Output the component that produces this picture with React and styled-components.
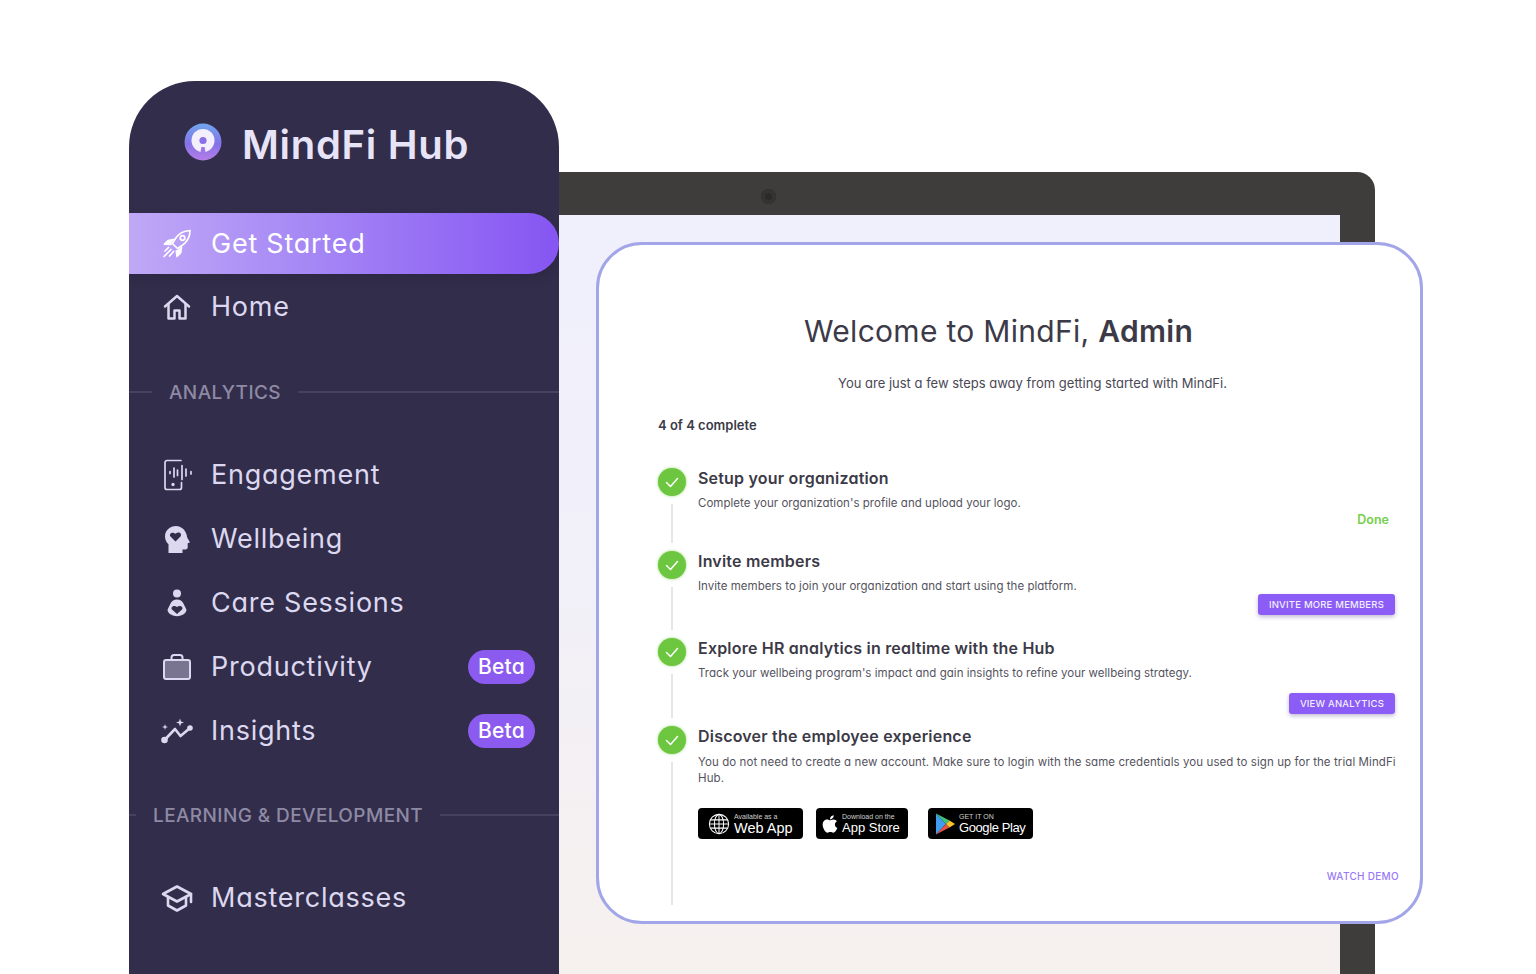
import React from 'react'
import styled, { createGlobalStyle } from 'styled-components'
import { FaApple } from 'react-icons/fa'

const GlobalStyle = createGlobalStyle`
    html, body {
        margin: 0;
        padding: 0;
        background: #fff;
    }
    * {
        box-sizing: border-box;
    }
    body {
        font-family: Inter, 'Noto Sans', sans-serif;
        font-feature-settings: 'cv11' 1;
    }
`

const SIDEBAR_BG = '#322d4a'

const LogoMark = () => (
    <svg width='38' height='38' viewBox='0 0 38 38'>
        <defs>
            <linearGradient id='logoFill' x1='0' y1='0' x2='0' y2='1'>
                <stop offset='0' stopColor='#6fa6ee' />
                <stop offset='0.55' stopColor='#8572e8' />
                <stop offset='1' stopColor='#b67de8' />
            </linearGradient>
        </defs>
        <circle cx='19' cy='19' r='18.5' fill='url(#logoFill)' />
        <circle cx='19' cy='17.5' r='11.5' fill='#f4effc' />
        <circle cx='19' cy='17.5' r='3.6' fill='#8a6fe6' />
        <path d='M17.4 24h3.2l1 5.5h-5.2z' fill='#a077e8' />
    </svg>
)

const RocketIcon = () => (
    <svg width='32' height='32' viewBox='0 0 32 32' fill='none' stroke='#fff' strokeWidth='1.7' strokeLinejoin='round' strokeLinecap='round'>
        <path d='M29 2.5c-6.5.3-11.5 3.5-14.5 8l-3.2 5 5.2 5 5-3.4c4.500-3.100 7.500-8.100 7.500-14.600z' />
        <circle cx='21.500' cy='10' r='2.300' />
        <path d='M12.500 11.500 7 12.500l-3.500 3.700 6.500.3M20.500 19l-.8 5.700-3.700 3.800-.6-5.700' fill='#fff' />
        <path d='M10 21.500 3 28.500M7.500 19.500 4 23M12.500 23.500 8.500 28' />
    </svg>
)

const HomeIcon = () => (
    <svg width='30' height='30' viewBox='0 0 30 30' fill='none' stroke='currentColor' strokeWidth='2.500' strokeLinejoin='round' strokeLinecap='round'>
        <path d='M3 14.500 15 4l12 10.500' />
        <path d='M6.500 12v14.500h6V18.500h5v8h6V12' />
    </svg>
)

const EngagementIcon = () => (
    <svg width='32' height='32' viewBox='0 0 32 32' fill='none' stroke='currentColor' strokeWidth='1.700' strokeLinecap='round'>
        <path d='M20 1.500H6a2 2 0 0 0-2 2v25a2 2 0 0 0 2 2h12.500a2 2 0 0 0 2-2v-5' />
        <path d='M9 12.500v2M13 9v9M16.500 11v5.500M21 6.500v14M25 10v7M30 12.500v2.500' />
        <circle cx='12' cy='25.500' r='0.800' fill='currentColor' />
    </svg>
)

const HeadIcon = () => (
    <svg width='30' height='30' viewBox='0 0 30 30'>
        <path fill='currentColor' d='M14 2C8 2 3 6.500 3 12.500c0 3.200 1.400 5.800 3.500 7.700V29h14v-3.500h3c1.300 0 2.200-.9 2.200-2.200v-4l2.300-.9-2.800-5C24.500 7 20 2 14 2z' />
        <path fill={SIDEBAR_BG} d='M13.500 17.500 8.500 12.500c-2-2.500 1.800-5.500 5-2.700 3.200-2.800 7-.2 5 2.700z' />
    </svg>
)

const CareIcon = () => (
    <svg width='30' height='30' viewBox='0 0 30 30'>
        <circle cx='15' cy='5.500' r='4' fill='currentColor' />
        <path fill='currentColor' d='M15 11.500c3 0 5.300 1.300 6.300 3.800l3 6c1 3-3.800 7-9.300 7s-10.300-4-9.300-7l3-6c1-2.500 3.300-3.800 6.300-3.800z' />
        <path fill={SIDEBAR_BG} d='M15 26l-5-4.500c-1.800-2.400 2-5 5-2.500 3-2.500 6.800.1 5 2.500z' />
    </svg>
)

const BriefcaseIcon = () => (
    <svg width='30' height='30' viewBox='0 0 30 30' fill='none' stroke='currentColor' strokeWidth='2'>
        <rect x='2' y='8' width='26' height='19' rx='2' fill='rgba(220,216,240,0.42)' />
        <path d='M9.500 8V5.500C9.500 4 10.500 3 12 3h6c1.500 0 2.500 1 2.500 2.500V8' />
    </svg>
)

const InsightsIcon = () => (
    <svg width='32' height='32' viewBox='0 0 32 32' fill='none' stroke='currentColor' strokeWidth='2.600' strokeLinecap='round' strokeLinejoin='round'>
        <path d='M3.500 25 14 14l5.500 7L29 13' />
        <circle cx='3.500' cy='25' r='2' fill='currentColor' />
        <circle cx='29' cy='13' r='1.500' fill='currentColor' />
        <path fill='currentColor' stroke='none' d='M19 3.500l1 3 3 1-3 1-1 3-1-3-3-1 3-1zM4 9l.7 2.300L7 12l-2.300.7L4 15l-.7-2.300L1 12l2.300-.7z' />
    </svg>
)

const CapIcon = () => (
    <svg width='32' height='32' viewBox='0 0 32 32' fill='none' stroke='currentColor' strokeWidth='2.600' strokeLinejoin='round' strokeLinecap='round'>
        <path d='M16 4.500 30 12l-14 7.500L2 12z' />
        <path d='M7 15v8.500l9 5 9-5V15' />
        <path d='M30 12v8' />
    </svg>
)

const CheckIcon = () => (
    <svg width='14' height='14' viewBox='0 0 14 14' fill='none' stroke='#fff' strokeWidth='1.500' strokeLinecap='round' strokeLinejoin='round'>
        <path d='M1.500 7.500 5.500 11.500 12.500 3.500' />
    </svg>
)

const GlobeIcon = () => (
    <svg width='22' height='22' viewBox='0 0 24 24' fill='none' stroke='#fff' strokeWidth='1.100'>
        <circle cx='12' cy='12' r='10.500' />
        <ellipse cx='12' cy='12' rx='5' ry='10.500' />
        <path d='M12 1.500v21M2.500 7.500h19M1.500 12h21M2.500 16.500h19' />
    </svg>
)

const PlayIcon = () => (
    <svg width='20' height='24' viewBox='0 0 20 24'>
        <path d='M1 1.500v21L11 12z' fill='#3f9cf0' />
        <path d='M1 1.500 11 12l3.500-3.500z' fill='#3bc47a' />
        <path d='M1 22.500 11 12l3.500 3.500z' fill='#e8503f' />
        <path d='M14.500 8.500 20 12l-5.500 3.500L11 12z' fill='#f8c32c' />
    </svg>
)

const navItems = [
    { label: 'Engagement', icon: <EngagementIcon /> },
    { label: 'Wellbeing', icon: <HeadIcon /> },
    { label: 'Care Sessions', icon: <CareIcon /> },
    { label: 'Productivity', icon: <BriefcaseIcon />, beta: true },
    { label: 'Insights', icon: <InsightsIcon />, beta: true }
]

const App = () => {
    return (
        <Stage>
            <GlobalStyle />
            <Sidebar>
                <Brand>
                    <LogoMark />
                    <BrandName>MindFi Hub</BrandName>
                </Brand>
                <ActiveItem>
                    <IconSlot><RocketIcon /></IconSlot>
                    Get Started
                </ActiveItem>
                <NavItem>
                    <IconSlot><HomeIcon /></IconSlot>
                    Home
                </NavItem>
                <SectionLabel lead='23px' top='43px' bottom='41px'>ANALYTICS</SectionLabel>
                {navItems.map(item => (
                    <NavItem key={item.label}>
                        <IconSlot>{item.icon}</IconSlot>
                        {item.label}
                        {item.beta && <Beta>Beta</Beta>}
                    </NavItem>
                ))}
                <SectionLabel lead='7px' top='42px' bottom='41px'>LEARNING &amp; DEVELOPMENT</SectionLabel>
                <NavItem>
                    <IconSlot><CapIcon /></IconSlot>
                    Masterclasses
                </NavItem>
            </Sidebar>
            <Laptop>
                <Camera />
                <Screen />
                <Card>
                    <Heading>Welcome to MindFi, <strong>Admin</strong></Heading>
                    <Intro>You are just a few steps away from getting started with MindFi.</Intro>
                    <Progress>4 of 4 complete</Progress>
                    <Step height='83px'>
                        <Rail>
                            <Check><CheckIcon /></Check>
                            <RailLine />
                        </Rail>
                        <StepBody>
                            <StepTitle>Setup your organization</StepTitle>
                            <StepText>Complete your organization's profile and upload your logo.</StepText>
                            <Done>Done</Done>
                        </StepBody>
                    </Step>
                    <Step height='87px'>
                        <Rail>
                            <Check><CheckIcon /></Check>
                            <RailLine />
                        </Rail>
                        <StepBody>
                            <StepTitle>Invite members</StepTitle>
                            <StepText>Invite members to join your organization and start using the platform.</StepText>
                            <ActionButton>INVITE MORE MEMBERS</ActionButton>
                        </StepBody>
                    </Step>
                    <Step height='88px'>
                        <Rail>
                            <Check><CheckIcon /></Check>
                            <RailLine />
                        </Rail>
                        <StepBody>
                            <StepTitle>Explore HR analytics in realtime with the Hub</StepTitle>
                            <StepText>Track your wellbeing program's impact and gain insights to refine your wellbeing strategy.</StepText>
                            <ActionButton gap='12px'>VIEW ANALYTICS</ActionButton>
                        </StepBody>
                    </Step>
                    <Step height='187px'>
                        <Rail>
                            <Check><CheckIcon /></Check>
                            <RailLine />
                        </Rail>
                        <StepBody>
                            <StepTitle>Discover the employee experience</StepTitle>
                            <LongText>You do not need to create a new account. Make sure to login with the same credentials you used to sign up for the trial MindFi Hub.</LongText>
                            <Badges>
                                <StoreBadge width='105px' pad='10px'>
                                    <GlobeIcon />
                                    <BadgeCopy>
                                        <BadgeSmall>Available as a</BadgeSmall>
                                        <BadgeBig size='14.500px'>Web App</BadgeBig>
                                    </BadgeCopy>
                                </StoreBadge>
                                <StoreBadge width='92px' pad='4px' close>
                                    <FaApple size={20} color='#fff' />
                                    <BadgeCopy>
                                        <BadgeSmall>Download on the</BadgeSmall>
                                        <BadgeBig size='13px'>App Store</BadgeBig>
                                    </BadgeCopy>
                                </StoreBadge>
                                <StoreBadge width='105px' pad='7px' wide>
                                    <PlayIcon />
                                    <BadgeCopy>
                                        <BadgeSmall>GET IT ON</BadgeSmall>
                                        <BadgeBig size='13px' tight>Google Play</BadgeBig>
                                    </BadgeCopy>
                                </StoreBadge>
                            </Badges>
                            <DemoLink>WATCH DEMO</DemoLink>
                        </StepBody>
                    </Step>
                </Card>
            </Laptop>
        </Stage>
    )
}

const Stage = styled.div`
    width: 1536px;
    height: 974px;
    padding: 81px 0 0 129px;
    display: flex;
    align-items: flex-start;
    overflow: hidden;
    background: #fff;
`

const Sidebar = styled.nav`
    width: 430px;
    height: 893px;
    flex-shrink: 0;
    position: relative;
    z-index: 2;
    overflow: hidden;
    background: ${SIDEBAR_BG};
    border-radius: 66px 66px 0 0;
    color: #dcd8f0;
`

const Brand = styled.div`
    height: 132px;
    padding: 42px 0 0 55px;
    display: flex;
    align-items: flex-start;
    gap: 20px;
`

const BrandName = styled.div`
    font-size: 40px;
    font-weight: 600;
    line-height: 46px;
    margin-top: -1px;
    letter-spacing: 0.7px;
    color: #e8e4f8;
`

const IconSlot = styled.span`
    width: 32px;
    height: 32px;
    margin-right: 18px;
    display: flex;
    align-items: center;
    justify-content: center;
`

const NavItem = styled.div`
    height: 64px;
    padding: 0 24px 0 32px;
    display: flex;
    align-items: center;
    font-size: 27px;
    font-weight: 400;
    letter-spacing: 0.75px;
    line-height: 32px;
`

const ActiveItem = styled(NavItem)`
    height: 61px;
    margin-bottom: 1px;
    border-radius: 0 31px 31px 0;
    background: linear-gradient(90deg, #c0a8f6 0%, #a485f5 45%, #8655f2 100%);
    box-shadow: 0 5px 10px rgba(30, 25, 50, 0.25);
    color: #fff;
`

const Beta = styled.span`
    margin-left: auto;
    width: 67px;
    height: 34px;
    border-radius: 17px;
    background: #8b5bf0;
    color: #fff;
    font-size: 21px;
    font-weight: 500;
    letter-spacing: 0.2px;
    display: flex;
    align-items: center;
    justify-content: center;
`

const SectionLabel = styled.div`
    height: 20px;
    margin: ${props => props.top} 0 ${props => props.bottom};
    display: flex;
    align-items: center;
    gap: 17px;
    font-size: 19px;
    font-weight: 500;
    letter-spacing: 0.4px;
    color: #8e8aa5;
    white-space: nowrap;

    &::before {
        content: '';
        width: ${props => props.lead};
        height: 2px;
        background: #46415e;
    }

    &::after {
        content: '';
        flex: 1;
        height: 2px;
        background: #46415e;
    }
`

const Laptop = styled.div`
    position: relative;
    width: 816px;
    height: 802px;
    margin-top: 91px;
    padding: 43px 35px 0 0;
    flex-shrink: 0;
    background: #3e3d3b;
    border-radius: 0 18px 0 0;
`

const Camera = styled.span`
    position: absolute;
    left: 202px;
    top: 17px;
    width: 15px;
    height: 15px;
    border-radius: 50%;
    background: #2a2a29;
    box-shadow: inset 0 0 0 4px #333331;
`

const Screen = styled.div`
    height: 100%;
    background: linear-gradient(180deg, #f0f0fd 0%, #f2f0f8 50%, #f6f1ee 100%);
`

const Card = styled.div`
    position: absolute;
    left: 37px;
    top: 70px;
    width: 827px;
    height: 682px;
    padding: 0 25px 0 59px;
    background: #fff;
    border: 3px solid #a2a5e8;
    border-radius: 46px;
    color: #3c3a47;
`

const Heading = styled.h1`
    margin: 66px 0 0;
    padding-right: 56px;
    text-align: center;
    font-size: 30px;
    font-weight: 400;
    letter-spacing: 0.3px;
    line-height: 40px;

    strong {
        font-weight: 600;
    }
`

const Intro = styled.p`
    margin: 24px 0 0;
    padding-left: 12px;
    text-align: center;
    font-size: 13px;
    line-height: 16px;
    color: #4a4854;
`

const Progress = styled.div`
    margin: 26px 0 35px;
    font-size: 13px;
    font-weight: 600;
    line-height: 16px;
`

const Step = styled.div`
    height: ${props => props.height};
    display: flex;
    gap: 12px;
`

const Rail = styled.div`
    width: 28px;
    display: flex;
    flex-direction: column;
    align-items: center;
    flex-shrink: 0;
`

const Check = styled.span`
    width: 28px;
    height: 28px;
    flex-shrink: 0;
    border-radius: 50%;
    background: #6cc63f;
    box-shadow: 0 0 3px rgba(108, 198, 63, 0.7);
    display: flex;
    align-items: center;
    justify-content: center;
`

const RailLine = styled.span`
    flex: 1;
    width: 2px;
    margin: 8px 0;
    background: #e6e6e6;
`

const StepBody = styled.div`
    flex: 1;
    min-width: 0;
    display: flex;
    flex-direction: column;
`

const StepTitle = styled.div`
    font-size: 16px;
    font-weight: 600;
    letter-spacing: 0.2px;
    line-height: 20px;
    color: #3c3a47;
`

const StepText = styled.p`
    margin: 7px 0 0;
    font-size: 11.500px;
    letter-spacing: 0.03px;
    line-height: 16px;
    color: #55535e;
`

const LongText = styled(StepText)`
    margin: 8px -4px 0 0;
    letter-spacing: 0.08px;
`

const Done = styled.div`
    align-self: flex-end;
    margin: 0 6px 0 0;
    font-size: 12.500px;
    font-weight: 600;
    line-height: 18px;
    color: #76cf4d;
`

const ActionButton = styled.button`
    align-self: flex-end;
    height: 21px;
    margin-top: ${props => props.gap || '0'};
    padding: 0 11px;
    border: 0;
    border-radius: 3px;
    background: #8b5cf6;
    box-shadow: 0 2px 4px rgba(80, 60, 140, 0.35);
    color: #f3eefe;
    font-family: inherit;
    font-feature-settings: inherit;
    font-size: 9.500px;
    font-weight: 500;
    letter-spacing: 0.2px;
    white-space: nowrap;
`

const Badges = styled.div`
    margin-top: 22px;
    display: flex;
    gap: 13px;
`

const StoreBadge = styled.div`
    width: ${props => props.width};
    height: 31px;
    margin-left: ${props => (props.wide ? '7px' : '0')};
    padding-left: ${props => props.pad};
    border-radius: 4px;
    background: #000;
    color: #fff;
    display: flex;
    align-items: center;
    gap: ${props => (props.close ? '2px' : '4px')};
    font-family: 'Liberation Sans', Arial, sans-serif;

    svg {
        flex-shrink: 0;
    }
`

const BadgeCopy = styled.div`
    display: flex;
    flex-direction: column;
    white-space: nowrap;
`

const BadgeSmall = styled.span`
    font-size: 7px;
    line-height: 8px;
    color: #cfcfcf;
`

const BadgeBig = styled.span`
    font-size: ${props => props.size};
    letter-spacing: ${props => (props.tight ? '-0.4px' : '0')};
    line-height: 14px;
`

const DemoLink = styled.div`
    align-self: flex-end;
    margin-top: 30px;
    margin-right: -4px;
    font-size: 10px;
    font-weight: 500;
    letter-spacing: 0.3px;
    line-height: 14px;
    color: #9a7bf5;
`

export default App
